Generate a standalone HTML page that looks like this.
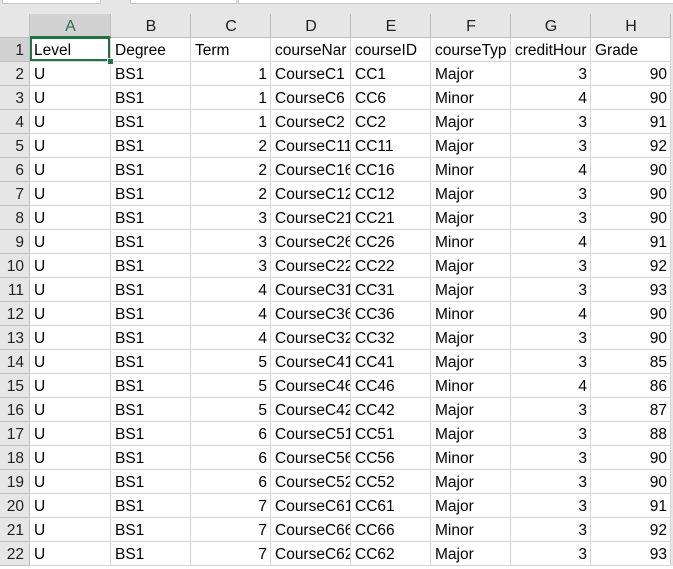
<!DOCTYPE html><html><head><style>
body{margin:0;width:673px;height:569px;overflow:hidden;background:#e6e6e6;font-family:"Liberation Sans",sans-serif;position:relative}
.c{position:absolute;box-sizing:border-box;height:24px;line-height:25px;font-size:15.5px;color:#000;overflow:hidden;white-space:nowrap;padding:0 3px 0 4px;border-right:1px solid #d4d4d4;border-bottom:1px solid #d4d4d4;background:#fff}
.h{background:#e6e6e6;color:#222;text-align:center;font-size:16px;border-color:#bdbdbd}
.r{text-align:right}
.box{position:absolute;top:0;height:3px;background:#fff;border:1px solid #c6c6c6;border-top:none}
</style></head><body>
<div class="box" style="left:2px;width:97px"></div>
<div class="box" style="left:130px;width:105px"></div>
<div class="box" style="left:238px;width:440px"></div>
<div id="g"></div>
<script>
var cols=[30,111,191,271,351,431,511,591,671];
var L=["A","B","C","D","E","F","G","H"];
var data=[["Level","Degree","Term","courseNar","courseID","courseTyp","creditHour","Grade"]];
var rows=[[1,1,"CC1","Major",3,90],[1,6,"CC6","Minor",4,90],[1,2,"CC2","Major",3,91],[2,11,"CC11","Major",3,92],[2,16,"CC16","Minor",4,90],[2,12,"CC12","Major",3,90],[3,21,"CC21","Major",3,90],[3,26,"CC26","Minor",4,91],[3,22,"CC22","Major",3,92],[4,31,"CC31","Major",3,93],[4,36,"CC36","Minor",4,90],[4,32,"CC32","Major",3,90],[5,41,"CC41","Major",3,85],[5,46,"CC46","Minor",4,86],[5,42,"CC42","Major",3,87],[6,51,"CC51","Major",3,88],[6,56,"CC56","Minor",3,90],[6,52,"CC52","Major",3,90],[7,61,"CC61","Major",3,91],[7,66,"CC66","Minor",3,92],[7,62,"CC62","Major",3,93]];
rows.forEach(function(r){data.push(["U","BS1",r[0],"CourseC"+r[1],r[2],r[3],r[4],r[5]]);});
var h="";
h+='<div class="c h" style="left:0;top:14px;width:30px"></div>';
for(var i=0;i<8;i++){var s=i==0?'background:#d2d2d2;color:#217346;border-bottom:2px solid #217346;':'';
h+='<div class="c h" style="left:'+cols[i]+'px;top:14px;width:'+(cols[i+1]-cols[i])+'px;'+s+'">'+L[i]+'</div>';}
for(var r=0;r<22;r++){var t=38+r*24;
h+='<div class="c h r" style="left:0;top:'+t+'px;width:30px;padding-right:5px;font-size:15.5px;'+(r==0?'background:#d2d2d2;':'')+'">'+(r+1)+'</div>';
for(var i=0;i<8;i++){var v=data[r][i];var num=typeof v=="number";
h+='<div class="c'+(num?' r':'')+'" style="left:'+cols[i]+'px;top:'+t+'px;width:'+(cols[i+1]-cols[i])+'px">'+v+'</div>';}}
h+='<div style="position:absolute;left:30px;top:37px;width:80px;height:24px;border:2px solid #217346;box-sizing:border-box"></div>';
h+='<div style="position:absolute;left:107px;top:58px;width:5px;height:5px;background:#217346;border:1px solid #fff"></div>';
h+='<div style="position:absolute;left:0;top:566px;width:673px;height:3px;background:#fff"></div>';
document.getElementById("g").innerHTML=h;
</script>
</body></html>
